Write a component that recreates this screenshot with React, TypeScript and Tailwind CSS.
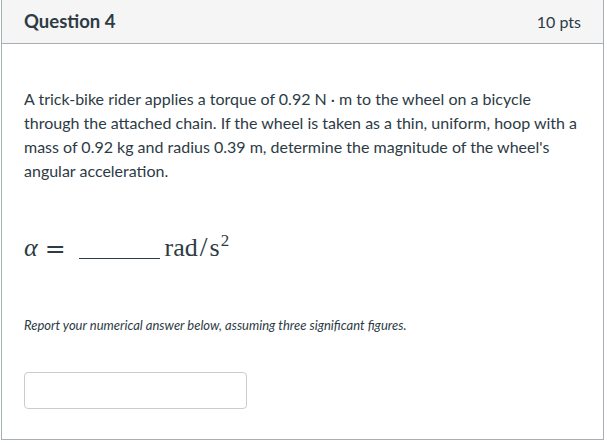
import React from 'react';

export default function App() {
	return (
		<div className="min-h-screen bg-white" style={{ fontFamily: 'Lato, "Noto Sans", sans-serif' }}>
			<div className="ml-px w-[603px] border border-t-0 border-[#a5afb5] text-[#2d3b45]">
				{/* Header */}
				<div className="flex h-[44px] items-center justify-between border-b border-[#a5afb5] bg-[#f5f5f5] px-[22px]">
					<h2 className="text-[18.5px] font-bold">Question 4</h2>
					<span className="text-[16px]">10 pts</span>
				</div>

				{/* Body */}
				<div className="px-[22px] pt-[43px] pb-[30px]">
					<p className="text-[16px] leading-[24px]">
						A trick-bike rider applies a torque of 0.92 N · m to the wheel on a bicycle through the attached chain. If the wheel is taken as a thin,
						uniform, hoop with a mass of 0.92 kg and radius 0.39 m, determine the magnitude of the wheel's angular acceleration.
					</p>

					<div className="mt-[46px] flex h-[32px] items-end text-[26px] leading-none" style={{ fontFamily: '"Liberation Serif", "DejaVu Serif", serif' }}>
						<span className="italic">α</span>
						<span className="ml-[7px] text-[25px]" style={{ fontFamily: '"DejaVu Serif", serif' }}>
							=
						</span>
						<span className="ml-[13px] mr-[5px] mb-[2px] inline-block h-px w-[81px] bg-[#2d3b45]" />
						<span>rad</span>
						<span className="mx-[2px] text-[28px]">/</span>
						<span>s</span>
						<span className="mb-[12px] ml-px text-[17px]">2</span>
					</div>

					<p className="mt-[54px] text-[13px] italic leading-[20px]">Report your numerical answer below, assuming three significant figures.</p>

					<input type="text" className="mt-[37px] block h-[37px] w-[223px] rounded-[4px] border border-[#c7cdd1] bg-white px-2 outline-none" />
				</div>
			</div>
		</div>
	);
}
